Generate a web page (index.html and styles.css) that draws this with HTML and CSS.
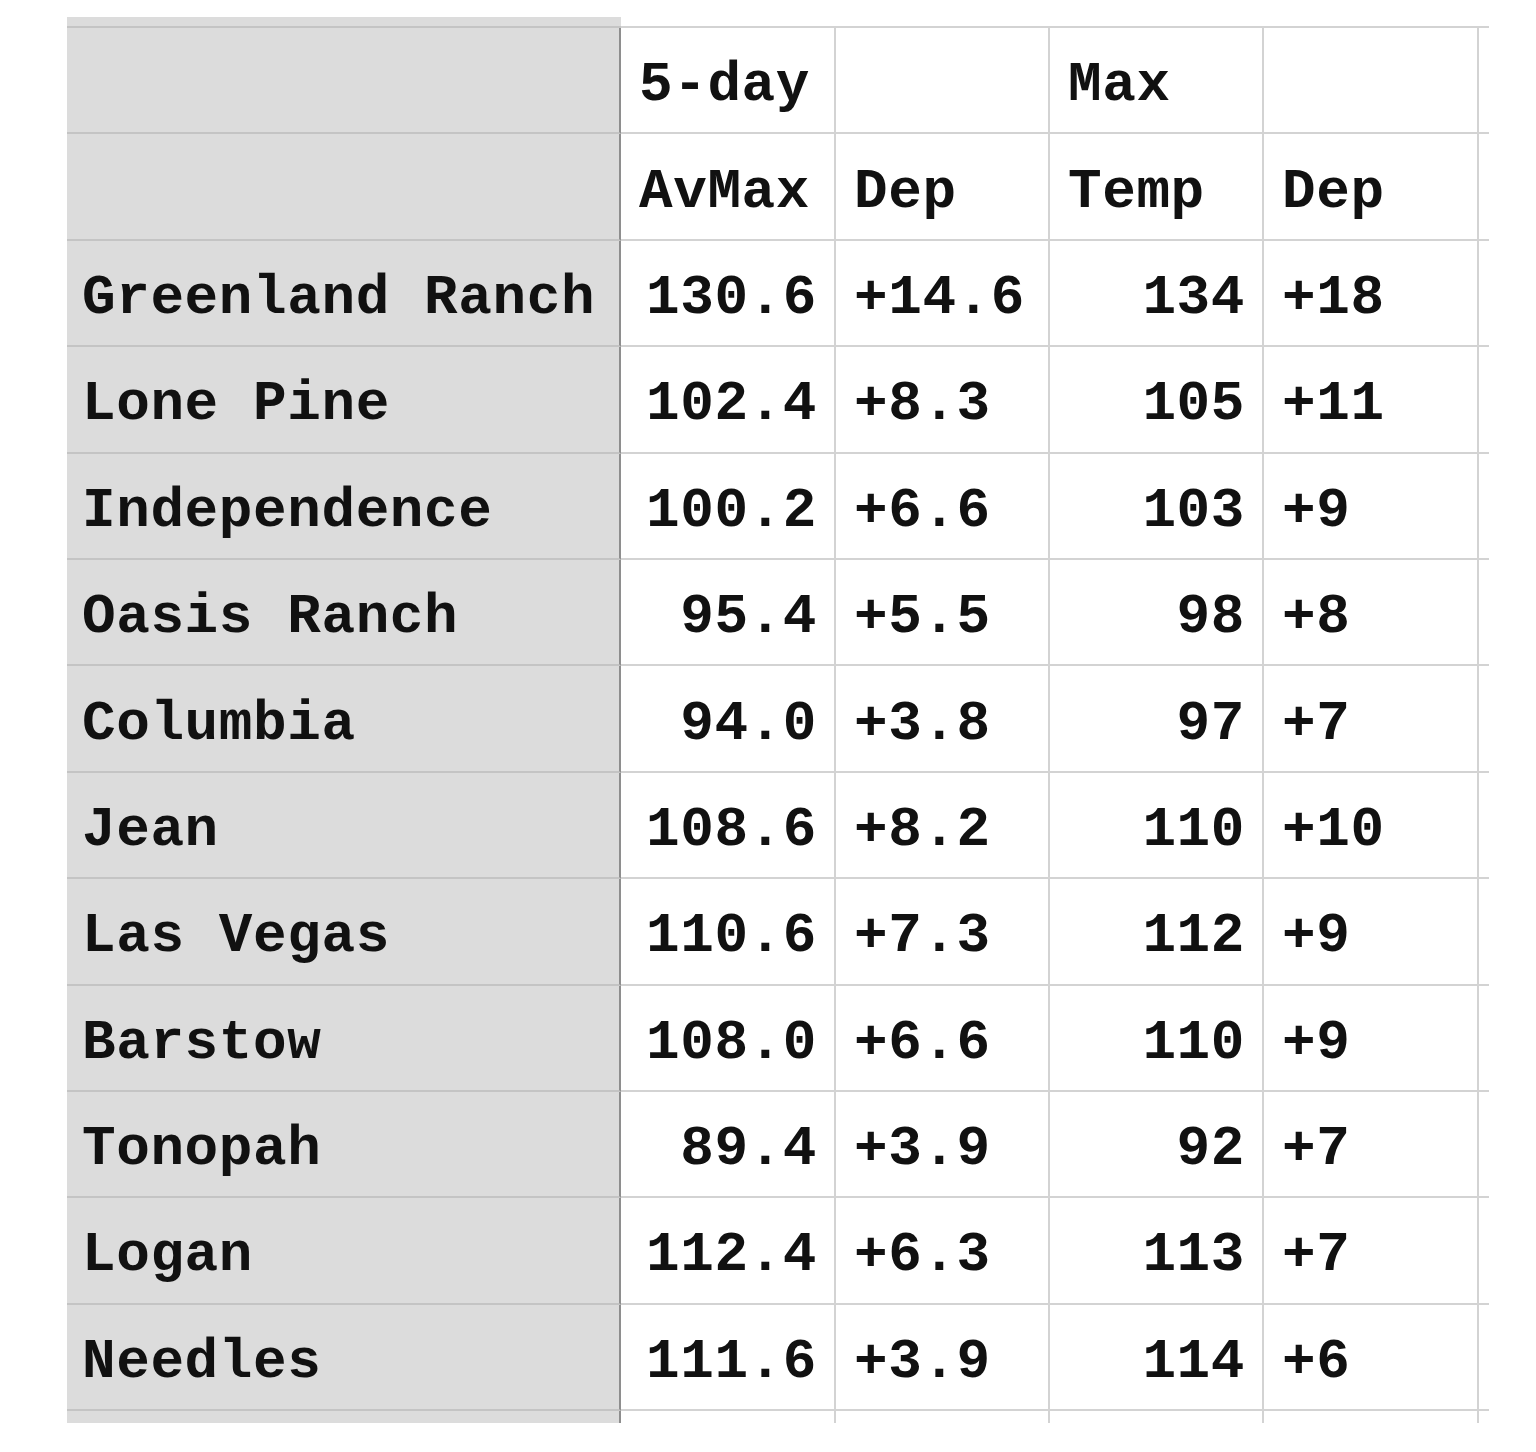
FILE: index.html
```html
<!DOCTYPE html>
<html lang="en">
<head>
<meta charset="utf-8">
<title>Heat wave temperatures</title>
<link rel="stylesheet" href="styles.css">
</head>
<body>
<div class="sheet">
  <div class="c lead cap"></div><div class="c cap"></div><div class="c cap"></div><div class="c cap"></div><div class="c cap"></div><div class="c cap end"></div>

  <div class="c lead"></div><div class="c">5-day</div><div class="c"></div><div class="c">Max</div><div class="c"></div><div class="c end"></div>
  <div class="c lead"></div><div class="c">AvMax</div><div class="c">Dep</div><div class="c">Temp</div><div class="c">Dep</div><div class="c end"></div>

  <div class="c lead">Greenland Ranch</div><div class="c num">130.6</div><div class="c">+14.6</div><div class="c num">134</div><div class="c">+18</div><div class="c end"></div>
  <div class="c lead">Lone Pine</div><div class="c num">102.4</div><div class="c">+8.3</div><div class="c num">105</div><div class="c">+11</div><div class="c end"></div>
  <div class="c lead">Independence</div><div class="c num">100.2</div><div class="c">+6.6</div><div class="c num">103</div><div class="c">+9</div><div class="c end"></div>
  <div class="c lead">Oasis Ranch</div><div class="c num">95.4</div><div class="c">+5.5</div><div class="c num">98</div><div class="c">+8</div><div class="c end"></div>
  <div class="c lead">Columbia</div><div class="c num">94.0</div><div class="c">+3.8</div><div class="c num">97</div><div class="c">+7</div><div class="c end"></div>
  <div class="c lead">Jean</div><div class="c num">108.6</div><div class="c">+8.2</div><div class="c num">110</div><div class="c">+10</div><div class="c end"></div>
  <div class="c lead">Las Vegas</div><div class="c num">110.6</div><div class="c">+7.3</div><div class="c num">112</div><div class="c">+9</div><div class="c end"></div>
  <div class="c lead">Barstow</div><div class="c num">108.0</div><div class="c">+6.6</div><div class="c num">110</div><div class="c">+9</div><div class="c end"></div>
  <div class="c lead">Tonopah</div><div class="c num">89.4</div><div class="c">+3.9</div><div class="c num">92</div><div class="c">+7</div><div class="c end"></div>
  <div class="c lead">Logan</div><div class="c num">112.4</div><div class="c">+6.3</div><div class="c num">113</div><div class="c">+7</div><div class="c end"></div>
  <div class="c lead">Needles</div><div class="c num">111.6</div><div class="c">+3.9</div><div class="c num">114</div><div class="c">+6</div><div class="c end"></div>

  <div class="c lead tail"></div><div class="c tail"></div><div class="c tail"></div><div class="c tail"></div><div class="c tail"></div><div class="c tail end"></div>
</div>
</body>
</html>
```

FILE: styles.css
```css
html, body {
  margin: 0;
  padding: 0;
  background: #ffffff;
}

.sheet {
  margin: 17px 0 0 67px;
  display: grid;
  grid-template-columns: 554px 215px 214px 214px 215px 10px;
  grid-template-rows: 11px repeat(13, 106.4px) 12px;
  width: max-content;
  font-family: "Liberation Mono", "Courier New", monospace;
  font-weight: bold;
  font-size: 56px;
  letter-spacing: 0.6px;
  color: #111111;
}

.c {
  box-sizing: border-box;
  display: flex;
  align-items: center;
  padding: 10px 18px 0 18px;
  border-bottom: 2px solid #d3d3d3;
  border-right: 2px solid #d3d3d3;
  white-space: nowrap;
  overflow: hidden;
}

.lead {
  background: #dcdcdc;
  padding-left: 15px;
  border-bottom-color: #c4c4c4;
  border-right-color: #8e8e8e;
}

.num {
  justify-content: flex-end;
  padding-right: 17px;
}

.end {
  border-right: none;
  padding: 0;
}

.cap {
  padding: 0;
  border-right: none;
}

.cap.lead {
  border-right: none;
}

.tail {
  padding: 0;
  border-bottom: none;
}
```
